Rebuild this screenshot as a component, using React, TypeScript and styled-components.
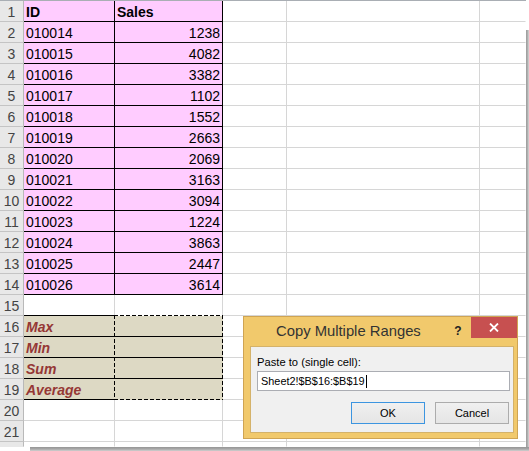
import React from 'react';
import styled, { createGlobalStyle } from 'styled-components';

const colors = {
  grid: '#d6d6d6',
  black: '#000000',
  pink: '#ffccff',
  tan: '#ddd9c4',
  maroon: '#953735',
  headBg: '#e8e8e8',
  headLine: '#c4c4c4',
  headText: '#444444',
  frame: '#f1c96c',
  frameLine: '#cfa453',
  panel: '#f0f0f0',
};

const GlobalStyle = createGlobalStyle`
  html, body {
    margin: 0;
    padding: 0;
    background: #ffffff;
  }
  body {
    font-family: 'Liberation Sans', Arial, sans-serif;
  }
`;

const Frame = styled.div`
  position: relative;
  width: 529px;
  height: 451px;
  overflow: hidden;
  background: #ffffff;

  &::before {
    content: '';
    position: absolute;
    left: 526px;
    top: 30px;
    width: 3px;
    bottom: 0;
    background: linear-gradient(to right, #9a9a9a, #b4b4b4 60%, #d8d8d8);
  }
  &::after {
    content: '';
    position: absolute;
    left: 30px;
    top: 447px;
    right: 0;
    height: 4px;
    background: linear-gradient(to bottom, #959595, #a8a8a8 50%, #d0d0d0);
  }
`;

const Sheet = styled.div`
  box-sizing: border-box;
  width: 526px;
  height: 447px;
  display: grid;
  grid-template-columns: 24px 91px 108px 64px 193px 46px;
  grid-template-rows: repeat(21, 21px) 5px;
  border-top: 1px solid #a9aeb4;
  background: #ffffff;
`;

type Line = 'grid' | 'black' | 'none';

const lineColor = (l?: Line) =>
  l === 'black' ? colors.black : l === 'none' ? 'transparent' : colors.grid;

const RowHead = styled.div<{ $last?: boolean }>`
  box-sizing: border-box;
  display: flex;
  align-items: flex-end;
  justify-content: center;
  padding-bottom: 1px;
  background: ${colors.headBg};
  border-right: 1px solid #b9b9b9;
  border-bottom: 1px solid ${(p) => (p.$last ? 'transparent' : colors.headLine)};
  color: ${colors.headText};
  font-size: 14px;
  line-height: 16px;
`;

const Cell = styled.div<{
  $fill?: string;
  $right?: Line;
  $bottom?: Line;
  $align?: 'left' | 'right';
  $bold?: boolean;
  $italic?: boolean;
  $color?: string;
}>`
  box-sizing: border-box;
  display: flex;
  align-items: flex-end;
  justify-content: ${(p) => (p.$align === 'right' ? 'flex-end' : 'flex-start')};
  padding: 0 2px 1px 2px;
  background: ${(p) => p.$fill ?? '#ffffff'};
  border-right: 1px solid ${(p) => lineColor(p.$right)};
  border-bottom: 1px solid ${(p) => lineColor(p.$bottom)};
  color: ${(p) => p.$color ?? colors.black};
  font-size: 14px;
  line-height: 16px;
  font-weight: ${(p) => (p.$bold ? 700 : 400)};
  font-style: ${(p) => (p.$italic ? 'italic' : 'normal')};
  white-space: nowrap;
`;

const AnchorCell = styled(Cell)`
  position: relative;
`;

// copy marquee around B16:B19
const dashH = 'repeating-linear-gradient(to right, #000 0 4px, transparent 4px 6px)';
const dashV = 'repeating-linear-gradient(to bottom, #000 0 4px, transparent 4px 6px)';

const Marquee = styled.div`
  position: absolute;
  left: -1px;
  top: -1px;
  width: 109px;
  height: 85px;
  z-index: 2;
  pointer-events: none;
  background:
    ${dashH} left top / 100% 1px no-repeat,
    ${dashH} left bottom / 100% 1px no-repeat,
    ${dashV} left top / 1px 100% no-repeat,
    ${dashV} right top / 1px 100% no-repeat;
`;

const Dialog = styled.div`
  position: absolute;
  left: 243px;
  top: 316px;
  width: 275px;
  height: 123px;
  box-sizing: border-box;
  display: flex;
  flex-direction: column;
  background: ${colors.frame};
  border: 1px solid ${colors.frameLine};
  z-index: 5;
  font-family: 'Liberation Sans', Arial, sans-serif;
`;

const TitleBar = styled.div`
  height: 29px;
  display: flex;
  align-items: flex-start;
  flex-shrink: 0;
`;

const Title = styled.div`
  flex: 1;
  padding: 6px 0 0 32px;
  font-size: 14.8px;
  color: #333333;
  white-space: nowrap;
`;

const HelpButton = styled.div`
  width: 26px;
  padding-top: 7px;
  text-align: center;
  font-size: 12px;
  font-weight: 700;
  color: #222222;
`;

const CloseButton = styled.div`
  width: 46px;
  height: 21px;
  display: flex;
  align-items: center;
  justify-content: center;
  background: #c75050;
`;

const Body = styled.div`
  flex: 1;
  margin: 0 3px 5px 6px;
  box-sizing: border-box;
  display: flex;
  flex-direction: column;
  padding: 8px 3px 0 6px;
  background: ${colors.panel};
  border: 1px solid #d4b26a;
`;

const Label = styled.div`
  font-size: 11.2px;
  line-height: 14px;
  color: #000000;
`;

const Input = styled.div`
  box-sizing: border-box;
  margin-top: 2px;
  height: 20px;
  display: flex;
  align-items: center;
  padding-left: 3px;
  background: #ffffff;
  border: 1px solid #abadb3;
  font-size: 10.9px;
  color: #000000;
`;

const Caret = styled.span`
  width: 1px;
  height: 13px;
  margin-left: 1px;
  background: #000000;
`;

const ButtonRow = styled.div`
  display: flex;
  justify-content: flex-end;
  gap: 10px;
  margin-top: 11px;
  padding-right: 1px;
`;

const Button = styled.div<{ $focused?: boolean }>`
  box-sizing: border-box;
  width: 74px;
  height: 22px;
  display: flex;
  align-items: center;
  justify-content: center;
  font-size: 11px;
  color: #000000;
  background: linear-gradient(to bottom, #f0f0f0, #e5e5e5);
  border: 1px solid ${(p) => (p.$focused ? '#3c95e0' : '#acacac')};
`;

const ids = [
  '010014', '010015', '010016', '010017', '010018', '010019', '010020',
  '010021', '010022', '010023', '010024', '010025', '010026',
];
const sales = [1238, 4082, 3382, 1102, 1552, 2663, 2069, 3163, 3094, 1224, 3863, 2447, 3614];
const summary = ['Max', 'Min', 'Sum', 'Average'];

const renderRow = (r: number) => {
  const last = r === 22;
  const bottom: Line = last ? 'none' : 'grid';
  const cells: React.ReactNode[] = [
    <RowHead key="h" $last={last}>{last ? '' : r}</RowHead>,
  ];

  if (r === 1) {
    cells.push(
      <Cell key="a" $fill={colors.pink} $right="black" $bottom="black" $bold>ID</Cell>,
      <Cell key="b" $fill={colors.pink} $right="black" $bottom="black" $bold>Sales</Cell>,
    );
  } else if (r <= 14) {
    cells.push(
      <Cell key="a" $fill={colors.pink} $right="black" $bottom="black">{ids[r - 2]}</Cell>,
      <Cell key="b" $fill={colors.pink} $right="black" $bottom="black" $align="right">
        {sales[r - 2]}
      </Cell>,
    );
  } else if (r === 15) {
    cells.push(
      <Cell key="a" $bottom="black" />,
      <Cell key="b" $bottom="none" />,
    );
  } else if (r <= 19) {
    const B = r === 16 ? AnchorCell : Cell;
    cells.push(
      <Cell key="a" $fill={colors.tan} $right="none" $bottom="black" $bold $italic $color={colors.maroon}>
        {summary[r - 16]}
      </Cell>,
      <B key="b" $fill={colors.tan} $right="none" $bottom={r === 19 ? 'none' : 'black'}>
        {r === 16 && <Marquee />}
      </B>,
    );
  } else {
    cells.push(<Cell key="a" $bottom={bottom} />, <Cell key="b" $bottom={bottom} />);
  }

  cells.push(
    <Cell key="c" $bottom={bottom} />,
    <Cell key="d" $bottom={bottom} />,
    <Cell key="e" $right="none" $bottom={bottom} />,
  );
  return <React.Fragment key={r}>{cells}</React.Fragment>;
};

export default function App() {
  const rows = Array.from({ length: 22 }, (_, i) => i + 1);
  return (
    <>
      <GlobalStyle />
      <Frame>
        <Sheet>{rows.map(renderRow)}</Sheet>
        <Dialog>
          <TitleBar>
            <Title>Copy Multiple Ranges</Title>
            <HelpButton>?</HelpButton>
            <CloseButton>
              <svg width="10" height="9" viewBox="0 0 10 9">
                <path d="M1 0.5 L9 8.5 M9 0.5 L1 8.5" stroke="#ffffff" strokeWidth="1.8" />
              </svg>
            </CloseButton>
          </TitleBar>
          <Body>
            <Label>Paste to (single cell):</Label>
            <Input>
              Sheet2!$B$16:$B$19
              <Caret />
            </Input>
            <ButtonRow>
              <Button $focused>OK</Button>
              <Button>Cancel</Button>
            </ButtonRow>
          </Body>
        </Dialog>
      </Frame>
    </>
  );
}
